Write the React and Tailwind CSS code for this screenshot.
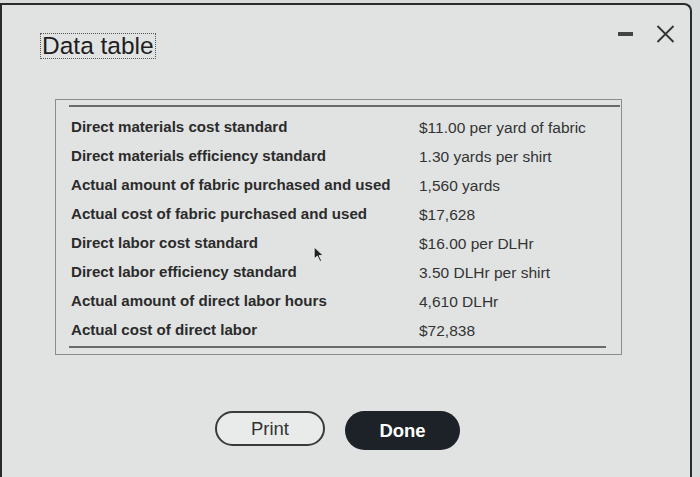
const rows = [
  ["Direct materials cost standard", "$11.00 per yard of fabric"],
  ["Direct materials efficiency standard", "1.30 yards per shirt"],
  ["Actual amount of fabric purchased and used", "1,560 yards"],
  ["Actual cost of fabric purchased and used", "$17,628"],
  ["Direct labor cost standard", "$16.00 per DLHr"],
  ["Direct labor efficiency standard", "3.50 DLHr per shirt"],
  ["Actual amount of direct labor hours", "4,610 DLHr"],
  ["Actual cost of direct labor", "$72,838"],
];

const App = () => {
  return (
    <div className="w-[700px] h-[477px] bg-[#d9dcdc] overflow-hidden font-['Liberation_Sans',Arial,sans-serif] text-[#262626]">
      <div className="relative mt-[3px] ml-0 w-[692px] h-[480px] bg-[#e1e3e3] border-t-2 border-r-2 border-l-2 border-[#2a2a2a] rounded-tr-lg">
        {/* window controls */}
        <div className="absolute top-[20px] right-[15px] flex items-center gap-[23px]">
          <div className="w-[15px] h-[4px] bg-[#444]" />
          <svg width="19" height="18" viewBox="0 0 19 18" fill="none" stroke="#333" strokeWidth="1.8">
            <path d="M1.5 1 L17.5 17 M17.5 1 L1.5 17" />
          </svg>
        </div>

        <div className="pt-[28px] pl-[38px]">
          <h1 className="inline-block border border-dotted border-[#555] px-[1px] leading-[24px] text-[24.5px] text-[#1e1e1e]">
            Data table
          </h1>
        </div>

        <div className="ml-[53px] mt-[38px] w-[567px] border border-[#8c8c8c] pt-[5px] pb-[6px]">
          <div className="ml-[13px] mr-[1px] border-t-2 border-[#6a6a6a]" />
          <div className="ml-[15px] pt-[6px]">
            {rows.map(([label, value]) => (
              <div key={label} className="flex h-[29px] items-center">
                <div className="w-[348px] font-bold text-[15.1px] text-[#2b2b2b]">{label}</div>
                <div className="text-[15.5px] text-[#333]">{value}</div>
              </div>
            ))}
          </div>
          <div className="ml-[13px] mr-[15px] mt-[1px] border-t-2 border-[#6a6a6a]" />
        </div>

        <div className="mt-[56px] ml-[213px] flex items-start gap-[20px]">
          <button className="w-[110px] h-[35px] rounded-full border-2 border-[#3a3a3a] bg-[#e9ebeb] text-[18.5px] text-[#333]">
            Print
          </button>
          <button className="w-[115px] h-[39px] rounded-full bg-[#1d2228] text-[18.5px] font-bold text-white">
            Done
          </button>
        </div>

        {/* mouse cursor */}
        <svg className="absolute left-[311px] top-[241px]" width="13" height="17" viewBox="0 0 12 16">
          <path d="M1 1 L1 12 L4 9.5 L6.5 14.5 L8 13.8 L5.6 9 L9.5 9 Z" fill="#222" stroke="#eee" strokeWidth="0.8" />
        </svg>
      </div>
    </div>
  );
};

export default App;
